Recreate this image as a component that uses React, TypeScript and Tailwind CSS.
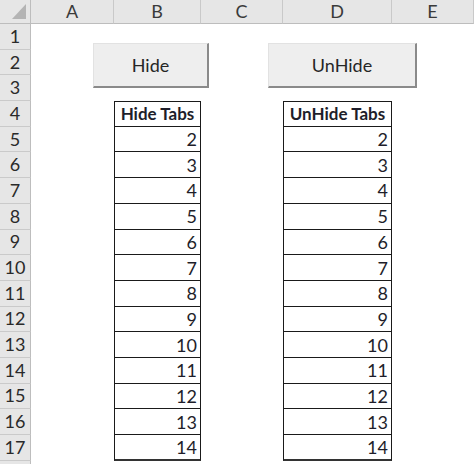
import React from 'react';

const cols = ['A', 'B', 'C', 'D', 'E'];
const rows = Array.from({ length: 18 }, (_, i) => i + 1);

// values listed in B5:B17 and D5:D17
const tabValue = (row: number) => row - 3;

function Cell({ row, col }: { row: number; col: number }) {
  const isTable = (col === 1 || col === 3) && row >= 4 && row <= 17;
  if (!isTable) return <div className="bg-white" />;

  const isHead = row === 4;
  const label = col === 1 ? 'Hide Tabs' : 'UnHide Tabs';
  return (
    <div
      className={`bg-white border-x-[1.5px] border-b-[1.5px] border-[#1a1a1a] flex items-center text-[#1e1e2a] leading-none
        ${isHead ? 'border-t-[1.5px] justify-center font-bold text-[17px]' : 'justify-end pr-[3px] text-[18px]'}
        ${row === 17 ? 'border-b-[2.5px] border-b-[#333]' : ''}`}
    >
      {isHead ? label : tabValue(row)}
    </div>
  );
}

function MacroButton({ label, className }: { label: string; className: string }) {
  return (
    <button
      className={`absolute h-[45px] bg-[#eeeeee] border-t border-l border-[#e2e2e2] border-r-2 border-b-2 border-r-[#8a8a8a] border-b-[#8a8a8a] text-[18px] text-[#262626] ${className}`}
    >
      {label}
    </button>
  );
}

export default function App() {
  return (
    <div
      className="relative w-[474px] h-[464px] overflow-hidden bg-white"
      style={{ fontFamily: 'Lato, "Open Sans", sans-serif' }}
    >
      <div className="grid grid-cols-[31px_83px_87px_82px_109px_82px] grid-rows-[24px_repeat(18,25.7px)]">
        {/* corner */}
        <div className="bg-[#e6e6e6] border-r border-b border-[#bdbdbd] flex items-end justify-end pr-[4px] pb-[4px]">
          <svg width="14" height="15" viewBox="0 0 14 15">
            <polygon points="14,0 14,15 0,15" fill="#b4b4b4" />
          </svg>
        </div>
        {cols.map((c) => (
          <div
            key={c}
            className="bg-[#e6e6e6] border-r border-b border-r-[#c9c9c9] border-b-[#bdbdbd] flex items-center justify-center text-[18px] text-[#3a3a3a]"
          >
            {c}
          </div>
        ))}

        {rows.map((r) => (
          <React.Fragment key={r}>
            <div className="bg-[#e6e6e6] border-r border-b border-r-[#bdbdbd] border-b-[#cacaca] flex items-center justify-center text-[18px] text-[#2a2a2a]">
              {r <= 17 ? r : ''}
            </div>
            {cols.map((_, ci) => (
              <Cell key={ci} row={r} col={ci} />
            ))}
          </React.Fragment>
        ))}
      </div>

      <MacroButton label="Hide" className="left-[93px] top-[43px] w-[116px]" />
      <MacroButton label="UnHide" className="left-[268px] top-[43px] w-[149px]" />
    </div>
  );
}
